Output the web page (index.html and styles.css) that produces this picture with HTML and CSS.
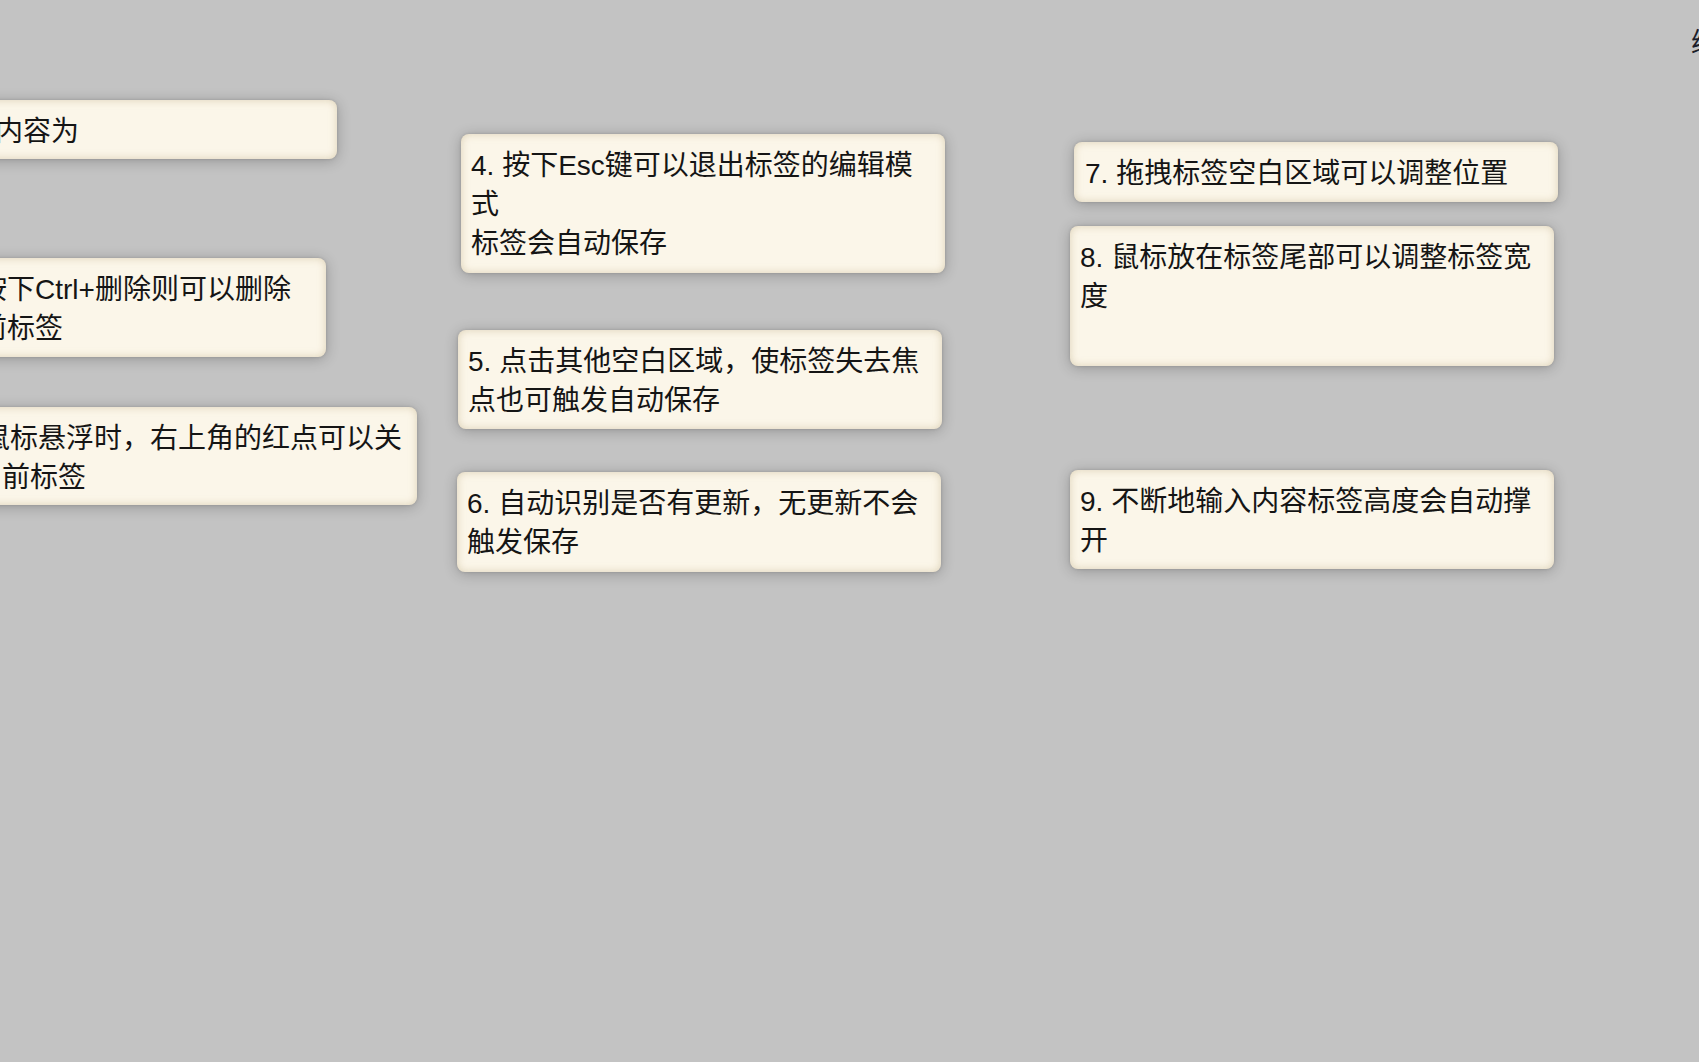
FILE: index.html
```html
<!DOCTYPE html>
<html lang="zh-CN">
<head>
<meta charset="utf-8">
<title>标签</title>
<link rel="stylesheet" href="styles.css">
</head>
<body>
<div class="board">
  <span class="corner">编</span>

  <div class="note n1"><span class="ln">内容为</span></div>
  <div class="note n2"><span class="ln">按下Ctrl+删除则可以删除</span><span class="ln">前标签</span></div>
  <div class="note n3"><span class="ln">鼠标悬浮时，右上角的红点可以关</span><span class="ln ln-shift">前标签</span></div>

  <div class="note n4"><span class="ln">4. 按下Esc键可以退出标签的编辑模</span><span class="ln">式</span><span class="ln">标签会自动保存</span></div>
  <div class="note n5"><span class="ln">5. 点击其他空白区域，使标签失去焦</span><span class="ln">点也可触发自动保存</span></div>
  <div class="note n6"><span class="ln">6. 自动识别是否有更新，无更新不会</span><span class="ln">触发保存</span></div>

  <div class="note n7"><span class="ln">7. 拖拽标签空白区域可以调整位置</span></div>
  <div class="note n8"><span class="ln">8. 鼠标放在标签尾部可以调整标签宽</span><span class="ln">度</span></div>
  <div class="note n9"><span class="ln">9. 不断地输入内容标签高度会自动撑</span><span class="ln">开</span></div>
</div>
</body>
</html>
```
FILE: styles.css
```css
html, body {
  margin: 0;
  padding: 0;
  width: 1699px;
  height: 1062px;
  overflow: hidden;
  background: #c3c3c3;
}

.board {
  position: relative;
  width: 1699px;
  height: 1062px;
  overflow: hidden;
  font-family: "Liberation Sans", "Noto Sans CJK SC", sans-serif;
  color: #151515;
}

.corner {
  position: absolute;
  left: 1691px;
  top: 30px;
  font-size: 28px;
  line-height: 28px;
  color: #1b1e2a;
}

.note {
  position: absolute;
  box-sizing: border-box;
  width: 484px;
  padding: 12px 10px 9px 10px;
  font-size: 28px;
  line-height: 39px;
  background: #fbf6e9;
  border-radius: 8px;
  box-shadow: 0 2px 14px rgba(0, 0, 0, 0.24), 0 0 3px rgba(0, 0, 0, 0.14), inset 0 0 8px rgba(180, 158, 110, 0.4);
}

.ln {
  display: block;
  white-space: nowrap;
}

.ln-shift {
  margin-left: 20px;
}

.n1 { left: -147px; top: 100px; height: 59px; padding-left: 142px; }
.n2 { left: -158px; top: 258px; height: 99px; padding-left: 137px; }
.n3 { left: -100px; top: 407px; width: 517px; height: 98px; padding-left: 82px; }

.n4 { left: 461px; top: 134px; height: 139px; }
.n5 { left: 458px; top: 330px; height: 99px; }
.n6 { left: 457px; top: 472px; height: 100px; }

.n7 { left: 1074px; top: 142px; height: 60px; padding-left: 11px; }
.n8 { left: 1070px; top: 226px; height: 140px; }
.n9 { left: 1070px; top: 470px; height: 99px; }
```
